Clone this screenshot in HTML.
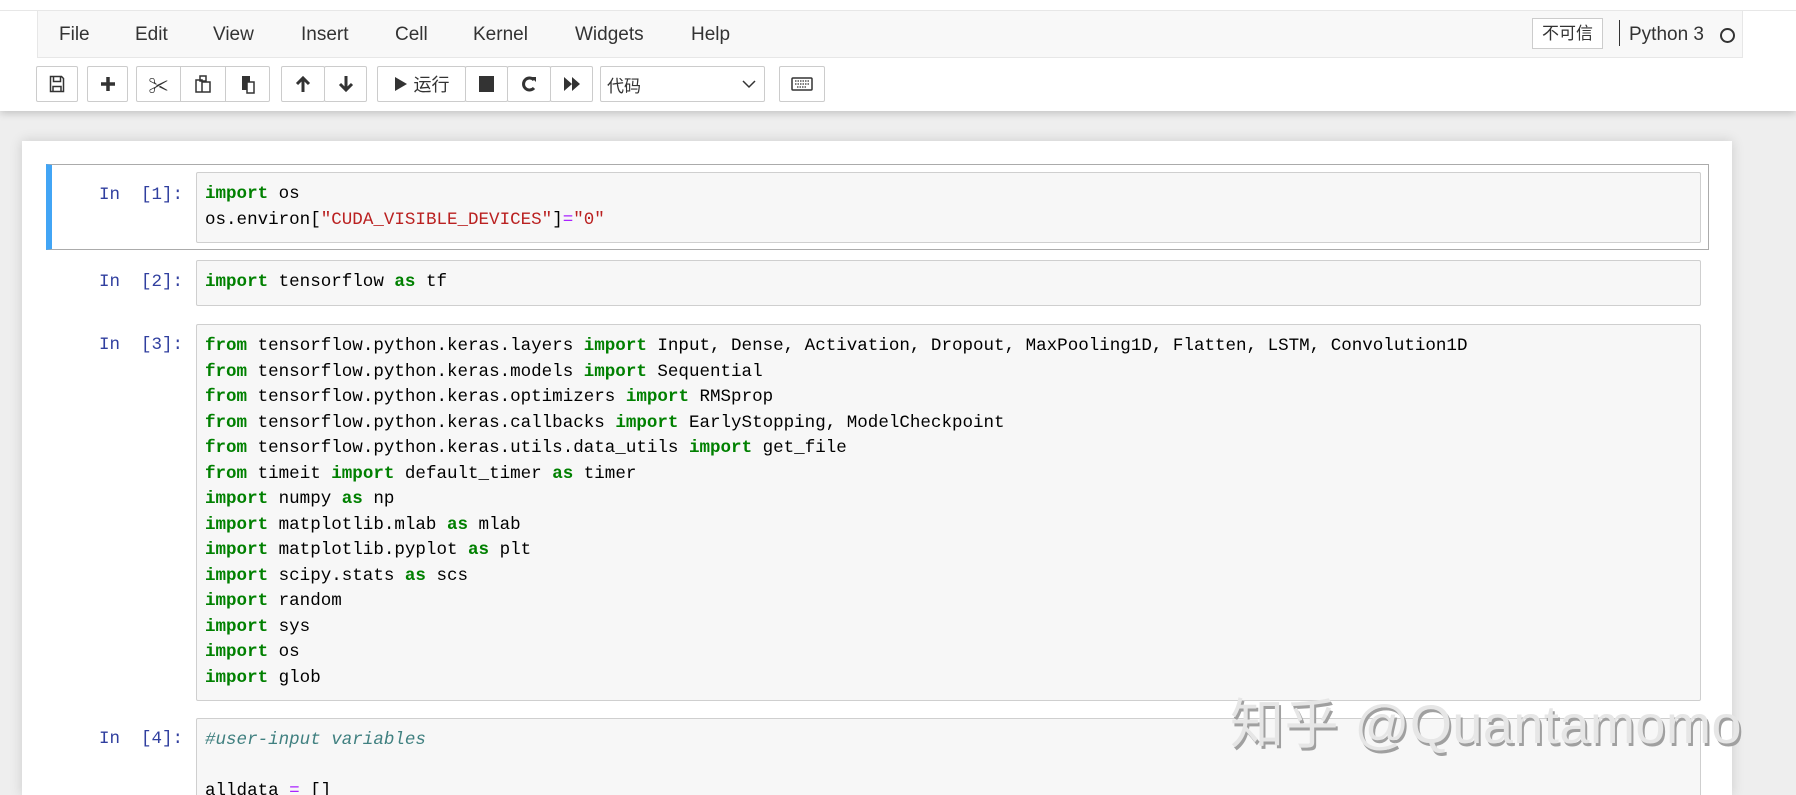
<!DOCTYPE html>
<html><head><meta charset="utf-8"><style>
*{box-sizing:border-box;margin:0;padding:0}
html,body{width:1796px;height:795px;overflow:hidden;background:#eeeeee;font-family:"Liberation Sans","Noto Sans CJK SC",sans-serif}
#wrap{position:relative;width:1796px;height:795px;overflow:hidden}
#hdr{position:absolute;left:0;top:0;width:1796px;height:111px;background:#fff;box-shadow:0 2px 8px rgba(0,0,0,.2);z-index:2}
#topline{position:absolute;left:0;top:10px;width:1796px;height:1px;background:#e7e7e7}
#menu{position:absolute;left:37px;top:11px;width:1706px;height:47px;background:#f8f8f8;border:1px solid #e7e7e7;border-top:none}
.mi{position:absolute;top:13px;font-size:19px;color:#333}
#trust{position:absolute;left:1494px;top:7px;width:71px;height:31px;border:1px solid #ccc;background:#fff;font-size:17px;text-align:center;line-height:29px;color:#333}
#sep{position:absolute;left:1581px;top:9px;width:1px;height:26px;background:#333}
#py{position:absolute;left:1591px;top:13px;font-size:19px;color:#333}
#circ{position:absolute;left:1682px;top:17px;width:15px;height:15px;border:2.5px solid #333;border-radius:50%}
.btn{position:absolute;top:66px;height:36px;border:1px solid #ccc;background:#fff;border-radius:2px;display:flex;align-items:center;justify-content:center;color:#333;font-size:17px}
.btn svg{display:block}
#panel{position:absolute;left:22px;top:141px;width:1710px;height:654px;background:#fff;box-shadow:0 0 12px rgba(0,0,0,.15)}
.cell{position:absolute;left:46px;width:1663px}
.sel{border:1px solid #ababab;border-left:6px solid #42a5f5}
.prompt{position:absolute;left:0;width:137px;text-align:right;color:#303f9f;font-family:"Liberation Mono",monospace;font-size:17.5px;line-height:25.5px;white-space:pre}
.inp{position:absolute;left:150px;width:1505px;background:#f7f7f7;border:1px solid #cfcfcf;border-radius:2px;padding:9px 0 0 8px;font-family:"Liberation Mono",monospace;font-size:17.55px;line-height:25.5px;color:#000;white-space:pre}
.k{color:#008000;font-weight:bold}.s{color:#ba2121}.o{color:#aa22ff}.c{color:#408080;font-style:italic}
#wm{position:absolute;left:1230px;top:680px;font-size:54px;color:#e6e6e6;font-family:"Liberation Sans","Noto Sans CJK SC",sans-serif;text-shadow:2px 3px 0 #a0a0a0;white-space:nowrap;letter-spacing:0.5px}
</style></head><body><div id="wrap">
<div id="hdr">
<div id="topline"></div>
<div id="menu">
<span class="mi" style="left:21px">File</span>
<span class="mi" style="left:97px">Edit</span>
<span class="mi" style="left:175px">View</span>
<span class="mi" style="left:263px">Insert</span>
<span class="mi" style="left:357px">Cell</span>
<span class="mi" style="left:435px">Kernel</span>
<span class="mi" style="left:537px">Widgets</span>
<span class="mi" style="left:653px">Help</span>
<div id="trust">不可信</div><div id="sep"></div><div id="py">Python 3</div><div id="circ"></div>
</div>
<div class="btn" style="left:36px;width:42px"><svg width="16" height="18" viewBox="0 0 16 18"><path d="M1.5 1.5h11l2 2v13h-13z M4.5 1.5v5h7v-5 M4 16.5v-5h8v5" fill="none" stroke="#333" stroke-width="1.5"/></svg></div>
<div class="btn" style="left:87px;width:41px"><svg width="16" height="16"><path d="M8 1v14M1 8h14" stroke="#333" stroke-width="3.5"/></svg></div>
<div class="btn" style="left:136px;width:45px;border-radius:2px 0 0 2px"><span style="font-size:20px">✂</span></div>
<div class="btn" style="left:180px;width:46px;border-radius:0"><svg width="18" height="20"><path d="M6 2h6v5h-6zM2 6h6v12h-6zM8 8h8v10h-8" fill="none" stroke="#333" stroke-width="1.5"/></svg></div>
<div class="btn" style="left:225px;width:45px;border-radius:0 2px 2px 0"><svg width="16" height="20"><path d="M2 2h8v14h-8z" fill="#333"/><path d="M7 8h7v11h-7z" fill="#fff" stroke="#333" stroke-width="1.5"/></svg></div>
<div class="btn" style="left:281px;width:44px"><svg width="16" height="18"><path d="M8 17V3M2 9l6-6 6 6" fill="none" stroke="#333" stroke-width="3"/></svg></div>
<div class="btn" style="left:324px;width:43px"><svg width="16" height="18"><path d="M8 1v14M2 9l6 6 6-6" fill="none" stroke="#333" stroke-width="3"/></svg></div>
<div class="btn" style="left:377px;width:89px"><svg width="14" height="16"><path d="M1 1l12 7-12 7z" fill="#333"/></svg><span style="margin-left:6px;font-size:18px">运行</span></div>
<div class="btn" style="left:465px;width:43px"><div style="width:15px;height:16px;background:#333"></div></div>
<div class="btn" style="left:507px;width:44px"><svg width="16" height="18"><path d="M13 5A6 6 0 1 0 13 13" fill="none" stroke="#333" stroke-width="3"/><path d="M10 2h5v5z" fill="#333"/></svg></div>
<div class="btn" style="left:550px;width:43px"><svg width="18" height="16"><path d="M1 1l8 7-8 7zM9 1l8 7-8 7z" fill="#333"/></svg></div>
<div class="btn" style="left:600px;width:165px;justify-content:flex-start;padding-left:6px"><span style="font-size:17px">代码</span><svg style="position:absolute;right:8px" width="14" height="10"><path d="M1 2l6 6 6-6" fill="none" stroke="#333" stroke-width="1.5"/></svg></div>
<div class="btn" style="left:779px;width:46px"><svg width="22" height="14"><rect x="1" y="1" width="20" height="12" rx="1" fill="none" stroke="#333" stroke-width="1.5"/><path d="M4 4h14M4 7h14M6 10h10" stroke="#333" stroke-width="1.2" stroke-dasharray="1.5 1"/></svg></div>
</div>
<div id="panel"></div>
<div class="cell sel" style="top:164px;height:86px">
<div class="prompt" style="top:18px;left:-6px">In  [1]:</div>
<div class="inp" style="left:144px;top:7px;height:71px"><span class="k">import</span> os
os.environ[<span class="s">"CUDA_VISIBLE_DEVICES"</span>]<span class="o">=</span><span class="s">"0"</span></div>
</div>
<div class="cell" style="top:260px;height:46px">
<div class="prompt" style="top:10px">In  [2]:</div>
<div class="inp" style="top:0;height:46px"><span class="k">import</span> tensorflow <span class="k">as</span> tf</div>
</div>
<div class="cell" style="top:324px;height:377px">
<div class="prompt" style="top:9px">In  [3]:</div>
<div class="inp" style="top:0;height:377px"><span class="k">from</span> tensorflow.python.keras.layers <span class="k">import</span> Input, Dense, Activation, Dropout, MaxPooling1D, Flatten, LSTM, Convolution1D
<span class="k">from</span> tensorflow.python.keras.models <span class="k">import</span> Sequential
<span class="k">from</span> tensorflow.python.keras.optimizers <span class="k">import</span> RMSprop
<span class="k">from</span> tensorflow.python.keras.callbacks <span class="k">import</span> EarlyStopping, ModelCheckpoint
<span class="k">from</span> tensorflow.python.keras.utils.data_utils <span class="k">import</span> get_file
<span class="k">from</span> timeit <span class="k">import</span> default_timer <span class="k">as</span> timer
<span class="k">import</span> numpy <span class="k">as</span> np
<span class="k">import</span> matplotlib.mlab <span class="k">as</span> mlab
<span class="k">import</span> matplotlib.pyplot <span class="k">as</span> plt
<span class="k">import</span> scipy.stats <span class="k">as</span> scs
<span class="k">import</span> random
<span class="k">import</span> sys
<span class="k">import</span> os
<span class="k">import</span> glob</div>
</div>
<div class="cell" style="top:718px;height:77px">
<div class="prompt" style="top:9px">In  [4]:</div>
<div class="inp" style="top:0;height:90px"><span class="c">#user-input variables</span>

alldata <span class="o">=</span> []</div>
</div>
<div id="wm">知乎 @Quantamomo</div>
</div></body></html>
